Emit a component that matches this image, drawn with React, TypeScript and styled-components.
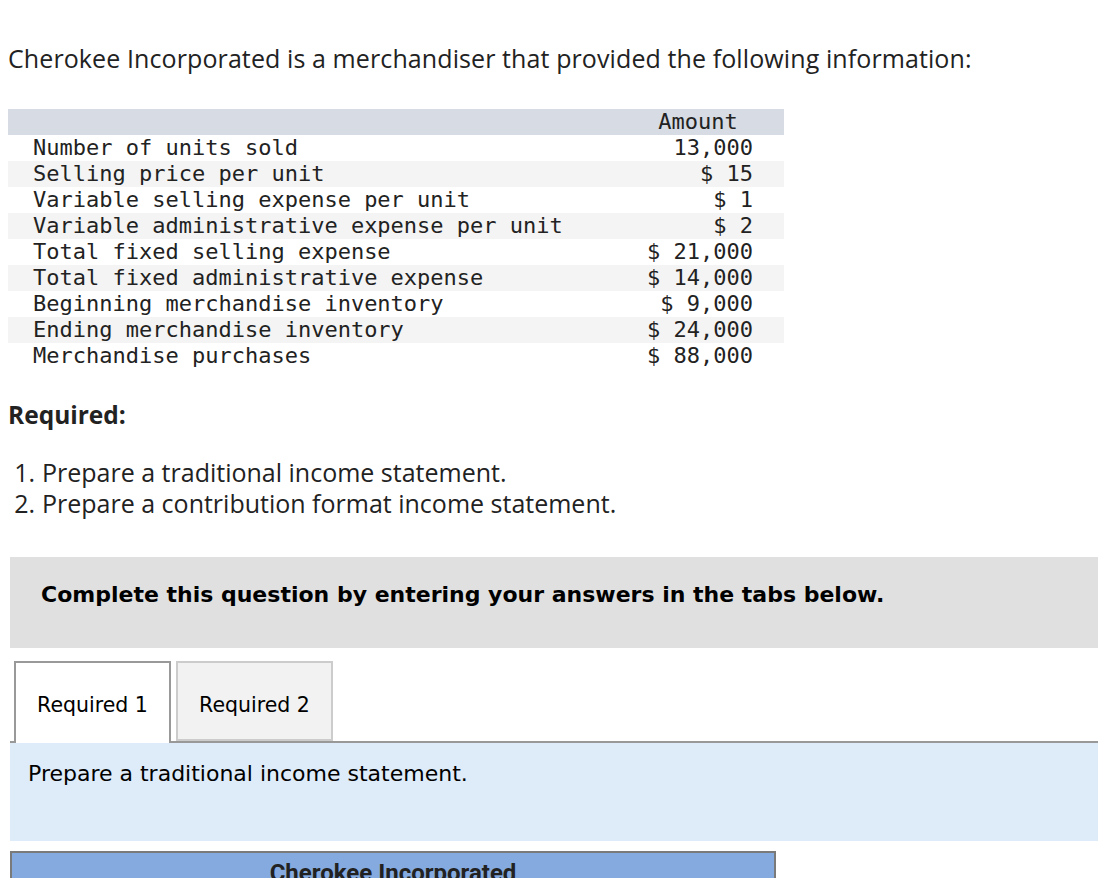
import React from "react";
import styled, { createGlobalStyle } from "styled-components";

const Global = createGlobalStyle`
  html, body { margin: 0; padding: 0; background: #fff; }
  body { font-family: "Open Sans", "Liberation Sans", sans-serif; color: #222; }
`;

const Page = styled.div`
  padding: 0 0 0 8px;
  width: 1090px;
`;

const Intro = styled.p`
  margin: 0;
  padding-top: 43px;
  font-size: 25px;
  letter-spacing: 0.1px;
  line-height: 30px;
  color: #222;
`;

const DataTable = styled.table`
  margin-top: 36px;
  border-collapse: collapse;
  width: 776px;
  font-family: "DejaVu Sans Mono", monospace;
  font-size: 22px;
  color: #222;
`;

const HeadRow = styled.tr`
  background: #d7dbe3;
`;

const Row = styled.tr<{ $alt: boolean }>`
  background: ${(p) => (p.$alt ? "#f4f4f4" : "#fff")};
`;

const LabelCell = styled.td`
  padding: 0 0 0 25px;
  height: 26px;
  line-height: 26px;
  white-space: pre;
`;

const AmountHead = styled.th`
  width: 172px;
  font-weight: normal;
  text-align: center;
  height: 26px;
  line-height: 26px;
  padding: 0;
`;

const AmountCell = styled.td`
  text-align: right;
  padding: 0 31px 0 0;
  height: 26px;
  line-height: 26px;
  white-space: pre;
`;

const RequiredHead = styled.h3`
  margin: 31px 0 0 0;
  font-size: 24.5px;
  line-height: 30px;
  font-weight: 700;
`;

const List = styled.ol`
  margin: 27px 0 0 0;
  padding: 0;
  list-style: none;
  font-size: 25px;
  line-height: 31px;
`;

const ListItem = styled.li`
  display: flex;
  gap: 7px;
`;

const Num = styled.span`
  width: 27px;
  text-align: right;
  flex: none;
`;

const Banner = styled.div`
  margin: 38px 0 0 2px;
  background: #e0e0e0;
  height: 91px;
  box-sizing: border-box;
  padding: 25px 0 0 31px;
  font-family: "DejaVu Sans", Verdana, sans-serif;
  font-weight: bold;
  font-size: 22px;
  line-height: 26px;
  color: #000;
`;

const TabBar = styled.div`
  margin: 13px 0 0 2px;
  display: flex;
  align-items: flex-end;
  gap: 5px;
  padding-left: 4px;
  border-bottom: 2px solid #999;
  height: 80px;
`;

const Tab = styled.div<{ $active: boolean }>`
  box-sizing: border-box;
  width: 157px;
  height: ${(p) => (p.$active ? "82px" : "80px")};
  margin-bottom: ${(p) => (p.$active ? "-2px" : "0")};
  border: 2px solid ${(p) => (p.$active ? "#999" : "#ccc")};
  border-bottom: ${(p) => (p.$active ? "none" : "2px solid #ccc")};
  background: ${(p) => (p.$active ? "#fff" : "#f2f2f2")};
  padding-top: 30px;
  text-align: center;
  font-family: "DejaVu Sans", Verdana, sans-serif;
  font-size: 20.5px;
  line-height: 24px;
  color: #000;
`;

const Panel = styled.div`
  margin-left: 2px;
  background: #deebf8;
  height: 98px;
  padding: 18px 0 0 18px;
  box-sizing: border-box;
  font-family: "DejaVu Sans", Verdana, sans-serif;
  font-size: 22px;
  color: #000;
`;

const Statement = styled.div`
  margin: 10px 0 0 2px;
  width: 766px;
  box-sizing: border-box;
  border: 2px solid #7a7a7a;
  background: #84aadf;
  height: 60px;
  text-align: center;
  padding-top: 6px;
  font-family: "Roboto", "Liberation Sans", sans-serif;
  font-weight: bold;
  font-size: 24px;
  line-height: 28px;
  color: #222;
`;

const rows: [string, string][] = [
  ["Number of units sold", "13,000"],
  ["Selling price per unit", "$ 15"],
  ["Variable selling expense per unit", "$ 1"],
  ["Variable administrative expense per unit", "$ 2"],
  ["Total fixed selling expense", "$ 21,000"],
  ["Total fixed administrative expense", "$ 14,000"],
  ["Beginning merchandise inventory", "$ 9,000"],
  ["Ending merchandise inventory", "$ 24,000"],
  ["Merchandise purchases", "$ 88,000"],
];

export default function App() {
  return (
    <Page>
      <Global />
      <Intro>Cherokee Incorporated is a merchandiser that provided the following information:</Intro>
      <DataTable>
        <thead>
          <HeadRow>
            <th />
            <AmountHead>Amount</AmountHead>
          </HeadRow>
        </thead>
        <tbody>
          {rows.map(([l, v], i) => (
            <Row key={l} $alt={i % 2 === 1}>
              <LabelCell>{l}</LabelCell>
              <AmountCell>{v}</AmountCell>
            </Row>
          ))}
        </tbody>
      </DataTable>
      <RequiredHead>Required:</RequiredHead>
      <List>
        <ListItem><Num>1.</Num><span>Prepare a traditional income statement.</span></ListItem>
        <ListItem><Num>2.</Num><span>Prepare a contribution format income statement.</span></ListItem>
      </List>
      <Banner>Complete this question by entering your answers in the tabs below.</Banner>
      <TabBar>
        <Tab $active={true}>Required 1</Tab>
        <Tab $active={false}>Required 2</Tab>
      </TabBar>
      <Panel>Prepare a traditional income statement.</Panel>
      <Statement>Cherokee Incorporated</Statement>
    </Page>
  );
}
